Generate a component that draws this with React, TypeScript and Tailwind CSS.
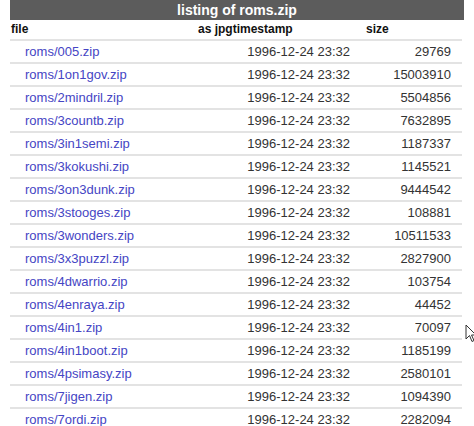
import React from "react";

const rows: [string, string][] = [
  ["roms/005.zip", "29769"],
  ["roms/1on1gov.zip", "15003910"],
  ["roms/2mindril.zip", "5504856"],
  ["roms/3countb.zip", "7632895"],
  ["roms/3in1semi.zip", "1187337"],
  ["roms/3kokushi.zip", "1145521"],
  ["roms/3on3dunk.zip", "9444542"],
  ["roms/3stooges.zip", "108881"],
  ["roms/3wonders.zip", "10511533"],
  ["roms/3x3puzzl.zip", "2827900"],
  ["roms/4dwarrio.zip", "103754"],
  ["roms/4enraya.zip", "44452"],
  ["roms/4in1.zip", "70097"],
  ["roms/4in1boot.zip", "1185199"],
  ["roms/4psimasy.zip", "2580101"],
  ["roms/7jigen.zip", "1094390"],
  ["roms/7ordi.zip", "2282094"],
];

export default function App() {
  return (
    <div
      className="relative h-[426px] w-[474px] overflow-hidden bg-white"
      style={{ fontFamily: '"Liberation Sans", Arial, sans-serif' }}
    >
      <div className="ml-[10px] w-[454px]">
        <div className="flex h-[20px] items-center justify-center bg-[#5c5c5c] text-[14px] font-bold leading-[20px] text-white">
          listing of roms.zip
        </div>
        <div className="grid h-[19px] grid-cols-[188px_168px_98px] items-center text-[12px] font-bold leading-[19px] text-[#111]">
          <div className="pl-[1px]">file</div>
          <div>as jpgtimestamp</div>
          <div>size</div>
        </div>
        {rows.map(([name, size]) => (
          <div
            key={name}
            className="grid h-[23px] w-[452px] grid-cols-[188px_168px_96px] border-t-2 border-[#e3e3e3] text-[13px] leading-[21px]"
          >
            <div className="pl-[15px] text-[#4545c4]">{name}</div>
            <div className="pr-[16px] text-right text-[#333]">1996-12-24 23:32</div>
            <div className="pr-[11px] text-right text-[#333]">{size}</div>
          </div>
        ))}
      </div>
      <svg
        className="absolute left-[465px] top-[324px]"
        width="10"
        height="19"
        viewBox="0 0 10 19"
      >
        <path
          d="M1 1 L1 15 L4.5 11.5 L7 17.5 L9 16.5 L6.5 11 L11 11 Z"
          fill="white"
          stroke="#333"
          strokeWidth="1"
          strokeLinejoin="round"
        />
      </svg>
    </div>
  );
}
